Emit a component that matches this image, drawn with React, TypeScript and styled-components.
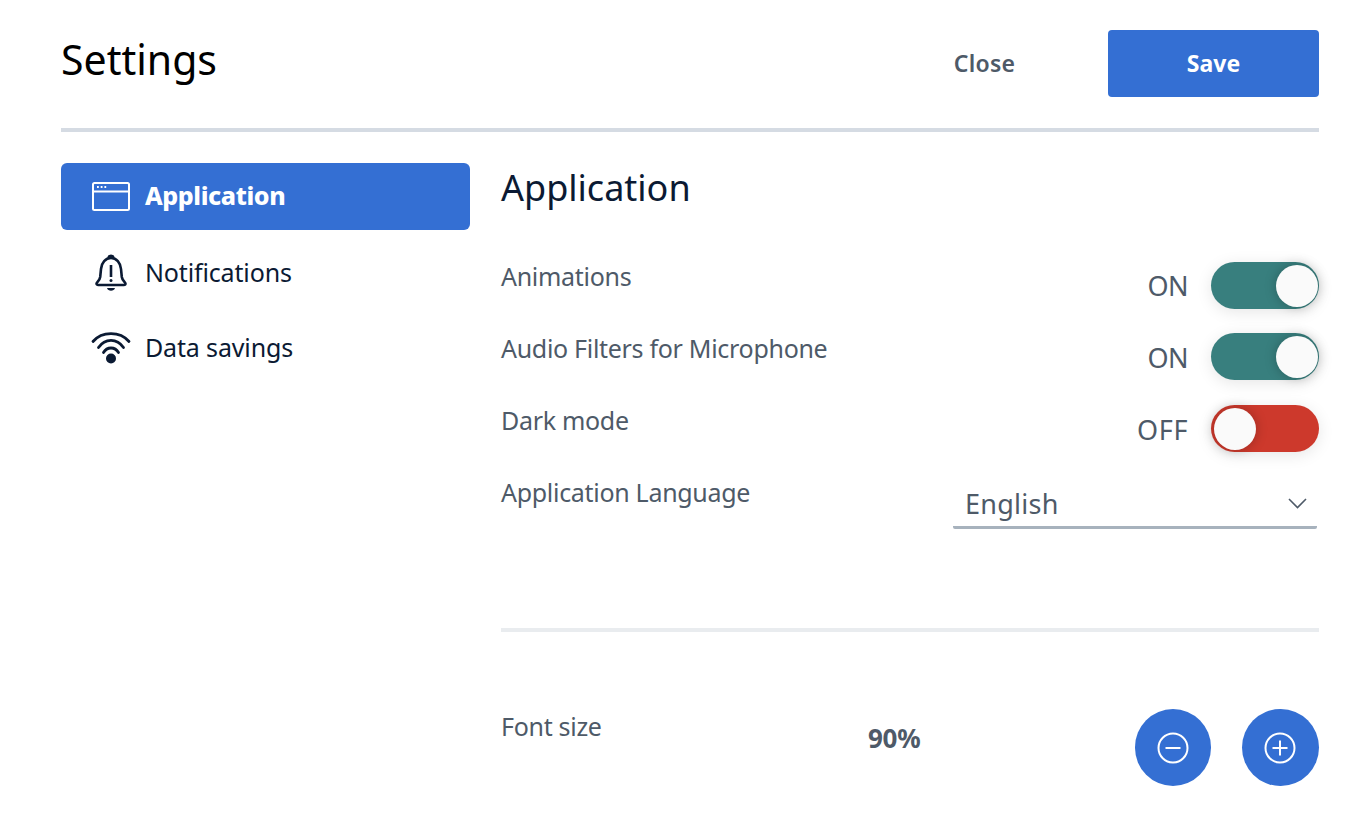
import React, { useState } from 'react'
import styled, { createGlobalStyle } from 'styled-components'

const GlobalStyle = createGlobalStyle`
  html, body {
    margin: 0;
    padding: 0;
    background: #fff;
  }
  body {
    font-family: 'Noto Sans', 'Open Sans', sans-serif;
    color: #0b1a33;
  }
`

const Page = styled.div`
  width: 1364px;
  height: 818px;
  box-sizing: border-box;
  padding: 30px 45px 0 61px;
  overflow: hidden;
`

const Header = styled.header`
  display: flex;
  align-items: flex-start;
  justify-content: space-between;
  height: 102px;
  box-sizing: border-box;
  padding-bottom: 31px;
  border-bottom: 4px solid #d5dbe3;
`

const Title = styled.h1`
  margin: 0;
  font-size: 41px;
  line-height: 58px;
  font-weight: 400;
  color: #000;
`

const HeaderActions = styled.div`
  display: flex;
  align-items: center;
`

const CloseButton = styled.button`
  width: 211px;
  height: 67px;
  padding: 0 36px 2px 0;
  border: 0;
  background: none;
  font: 600 23px 'Noto Sans', sans-serif;
  letter-spacing: 0.3px;
  color: #4e5a68;
`

const SaveButton = styled.button`
  width: 211px;
  height: 67px;
  padding: 0 0 2px;
  border: 0;
  border-radius: 4px;
  background: #346fd3;
  font: 700 23px 'Noto Sans', sans-serif;
  color: #fff;
`

const Body = styled.div`
  display: flex;
  padding-top: 31px;
`

const Sidebar = styled.nav`
  flex: 0 0 409px;
  margin-right: 31px;
`

const NavItem = styled.div<{ $active?: boolean }>`
  display: flex;
  align-items: center;
  height: ${p => (p.$active ? 67 : 75)}px;
  margin-bottom: ${p => (p.$active ? 5 : 0)}px;
  padding-left: 30px;
  border-radius: 6px;
  background: ${p => (p.$active ? '#346fd3' : 'transparent')};
  color: ${p => (p.$active ? '#fff' : '#0b1a33')};
  font-size: 25px;
  font-weight: ${p => (p.$active ? 800 : 400)};
  letter-spacing: ${p => (p.$active ? -0.4 : -0.15)}px;
`

const NavText = styled.span<{ $active?: boolean }>`
  margin-bottom: ${p => (p.$active ? 4 : 2)}px;
`

const NavIcon = styled.span`
  display: flex;
  justify-content: center;
  width: 40px;
  margin-right: 14px;
`

const Content = styled.main`
  flex: 1;
  min-width: 0;
`

const SectionTitle = styled.h2`
  margin: 0 0 49px;
  font-size: 36px;
  line-height: 50px;
  font-weight: 400;
  color: #0b1a33;
`

const Rows = styled.div`
  display: flex;
  flex-direction: column;
  gap: 25px;
`

const Row = styled.div`
  display: flex;
  justify-content: space-between;
  height: 47px;
`

const Label = styled.span`
  font-size: 25px;
  line-height: 28px;
  letter-spacing: -0.3px;
  color: #4e5a68;
`

const ToggleGroup = styled.div`
  display: flex;
  align-items: center;
  gap: 23px;
`

const ToggleText = styled.span<{ $on: boolean }>`
  font-size: 27px;
  letter-spacing: ${p => (p.$on ? -0.6 : 0.6)}px;
  color: #4e5a68;
`

const Track = styled.div<{ $on: boolean; $nudge?: boolean }>`
  display: flex;
  justify-content: ${p => (p.$on ? 'flex-end' : 'flex-start')};
  align-items: center;
  width: 108px;
  height: 47px;
  margin-bottom: ${p => (p.$nudge ? 2 : 0)}px;
  box-sizing: border-box;
  padding: 0 1px 0 3px;
  border-radius: 24px;
  background: ${p => (p.$on ? '#387f7e' : '#cd392c')};
  box-shadow: 0 3px 16px rgba(0, 0, 0, 0.1);
`

const Knob = styled.div`
  width: 42px;
  height: 42px;
  border-radius: 50%;
  background: #fafafa;
  box-shadow: 0 0 12px rgba(0, 0, 0, 0.25);
`

const Select = styled.div`
  display: flex;
  align-items: center;
  justify-content: space-between;
  width: 364px;
  height: 54px;
  margin: -3px 2px 0 0;
  box-sizing: border-box;
  padding: 6px 10px 0 12px;
  border-bottom: 3px solid #a7b2bd;
  border-radius: 0 0 2px 2px;
  font-size: 27px;
  letter-spacing: 0.25px;
  color: #4e5a68;
`

const Divider = styled.hr`
  height: 4px;
  margin: 103px 0 0;
  border: 0;
  background: #e9ecef;
`

const FontRow = styled.div`
  display: flex;
  align-items: flex-start;
  margin-top: 77px;
`

const FontLabel = styled(Label)`
  width: 367px;
  margin-top: 3px;
`

const Percent = styled.span`
  width: 266.5px;
  margin-top: 11px;
  font-size: 26px;
  line-height: 36px;
  font-weight: 700;
  letter-spacing: -0.3px;
  color: #4e5a68;
`

const RoundButton = styled.button`
  display: flex;
  align-items: center;
  justify-content: center;
  width: 76.5px;
  height: 77px;
  margin-right: 31px;
  padding: 0;
  border: 0;
  border-radius: 50%;
  background: #346fd3;
  &:last-child {
    margin-right: 0;
  }
`

const WindowIcon = () => (
  <svg width="38" height="29" viewBox="0 0 38 29" fill="none" stroke="#fff" strokeWidth="2">
    <rect x="1" y="1" width="36" height="27" rx="1.5" />
    <path d="M1 9.5h36" />
    <path d="M5 5h1.8M8.7 5h1.8M12.4 5h1.8" strokeWidth="1.8" />
  </svg>
)

const BellIcon = () => (
  <svg width="36" height="40" viewBox="0 0 36 40" fill="none" stroke="#0b1a33" strokeWidth="2.6">
    <path d="M15.5 5C16 2 20 2 20.5 5" />
    <path
      d="M3.5 30.5c0-1.200 3.200-2.800 3.700-6.500l.8-8C8.600 9.500 12.500 5 18 5s9.400 4.500 10 11l.8 8c.5 3.700 3.700 5.300 3.700 6.500 0 1-.7 1.500-1.700 1.500H5.200c-1 0-1.700-.5-1.700-1.500z"
      strokeLinejoin="round"
    />
    <path d="M18 12v12" />
    <circle cx="18" cy="27.500" r="1.500" fill="#0b1a33" stroke="none" />
    <path d="M14 35h8c-.8 3.500-7.200 3.500-8 0z" fill="#0b1a33" stroke="none" />
  </svg>
)

const WifiIcon = () => (
  <svg width="40" height="32" viewBox="0 0 40 32" fill="none" stroke="#0b1a33" strokeWidth="2.8" strokeLinecap="round">
    <path d="M2 9.500C11 -1 29 -1 38 9.500" />
    <path d="M7.500 15.500C14 6 26 6 32.500 15.500" />
    <path d="M12.500 20.500C16 14.500 24 14.500 27.500 20.500" />
    <circle cx="20" cy="26.500" r="5" fill="#0b1a33" stroke="none" />
  </svg>
)

const Chevron = () => (
  <svg width="19" height="11" viewBox="0 0 19 11" fill="none" stroke="#4e5a68" strokeWidth="1.6">
    <path d="M1 1l8.500 8.500L18 1" />
  </svg>
)

const ZoomIcon = ({ plus }: { plus?: boolean }) => (
  <svg width="32" height="32" viewBox="0 0 32 32" fill="none" stroke="#fff" strokeWidth="2">
    <circle cx="16" cy="16" r="14.500" />
    <path d="M8.500 16h15" />
    {plus && <path d="M16 8.500v15" />}
  </svg>
)

const Toggle = ({ on, nudge }: { on: boolean; nudge?: boolean }) => (
  <ToggleGroup>
    <ToggleText $on={on}>{on ? 'ON' : 'OFF'}</ToggleText>
    <Track $on={on} $nudge={nudge}>
      <Knob />
    </Track>
  </ToggleGroup>
)

const App: React.FC = () => {
  const [percent] = useState(90)

  return (
    <Page>
      <GlobalStyle />
      <Header>
        <Title>Settings</Title>
        <HeaderActions>
          <CloseButton type="button">Close</CloseButton>
          <SaveButton type="button">Save</SaveButton>
        </HeaderActions>
      </Header>
      <Body>
        <Sidebar>
          <NavItem $active>
            <NavIcon>
              <WindowIcon />
            </NavIcon>
            <NavText $active>Application</NavText>
          </NavItem>
          <NavItem>
            <NavIcon>
              <BellIcon />
            </NavIcon>
            <NavText>Notifications</NavText>
          </NavItem>
          <NavItem>
            <NavIcon>
              <WifiIcon />
            </NavIcon>
            <NavText>Data savings</NavText>
          </NavItem>
        </Sidebar>
        <Content>
          <SectionTitle>Application</SectionTitle>
          <Rows>
            <Row>
              <Label>Animations</Label>
              <Toggle on />
            </Row>
            <Row>
              <Label>Audio Filters for Microphone</Label>
              <Toggle on nudge />
            </Row>
            <Row>
              <Label>Dark mode</Label>
              <Toggle on={false} nudge />
            </Row>
            <Row>
              <Label>Application Language</Label>
              <Select>
                English
                <Chevron />
              </Select>
            </Row>
          </Rows>
          <Divider />
          <FontRow>
            <FontLabel>Font size</FontLabel>
            <Percent>{percent}%</Percent>
            <RoundButton type="button" aria-label="Decrease font size">
              <ZoomIcon />
            </RoundButton>
            <RoundButton type="button" aria-label="Increase font size">
              <ZoomIcon plus />
            </RoundButton>
          </FontRow>
        </Content>
      </Body>
    </Page>
  )
}

export default App
